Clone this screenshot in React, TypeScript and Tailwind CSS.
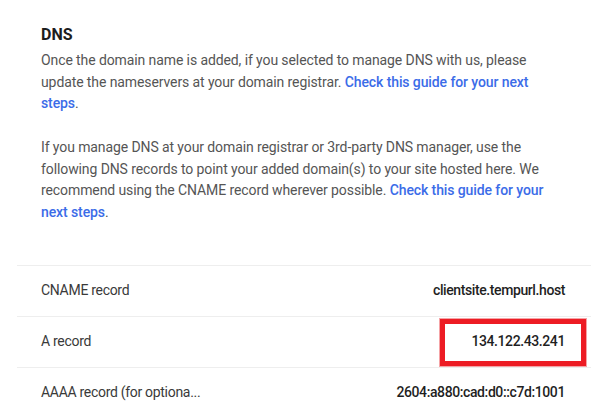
const records = [
  { label: "CNAME record", value: "clientsite.tempurl.host" },
  { label: "A record", value: "134.122.43.241", highlight: true },
  { label: "AAAA record (for optiona...", value: "2604:a880:cad:d0::c7d:1001" },
];

function GuideLink({ children }: { children: React.ReactNode }) {
  return (
    <a href="#" className="font-medium text-[#3b6ce8] no-underline">
      {children}
    </a>
  );
}

export default function App() {
  return (
    <div className="min-h-[417px] bg-white font-['Roboto',_'Liberation_Sans',_sans-serif]">
      <div className="ml-[17px] w-[574px]">
        <div className="px-[24px] pt-[23px]">
          <h2 className="mb-[3px] text-[16px] font-bold leading-6 text-[#1d1d1d]">DNS</h2>
          <p className="text-[14px] leading-[21.7px] tracking-[-0.1px] text-[#555]">
            Once the domain name is added, if you selected to manage DNS with us, please update the
            nameservers at your domain registrar. <GuideLink>Check this guide for your next steps</GuideLink>.
          </p>
          <p className="mt-[21.7px] text-[14px] leading-[21.7px] tracking-[-0.1px] text-[#555]">
            If you manage DNS at your domain registrar or 3rd-party DNS manager, use the following DNS
            records to point your added domain(s) to your site hosted here. We recommend using the CNAME
            record wherever possible. <GuideLink>Check this guide for your next steps</GuideLink>.
          </p>
        </div>

        <div className="mt-[41px]">
          {records.map((r) => (
            <div
              key={r.label}
              className="relative flex h-[51px] items-center justify-between border-t border-[#eeeeee] px-[24px] text-[14px]"
            >
              <span className="tracking-[-0.3px] text-[#3a3a3a]">{r.label}</span>
              <span className="pr-[2px] font-medium tracking-[-0.4px] text-[#1f1f1f]">{r.value}</span>
              {r.highlight && (
                <div className="absolute right-[5px] top-[2px] h-[47px] w-[146px] border-[5px] border-[#ed1c24] shadow-[0_0_0_1px_#f5a3a6]" />
              )}
            </div>
          ))}
        </div>
      </div>
    </div>
  );
}
